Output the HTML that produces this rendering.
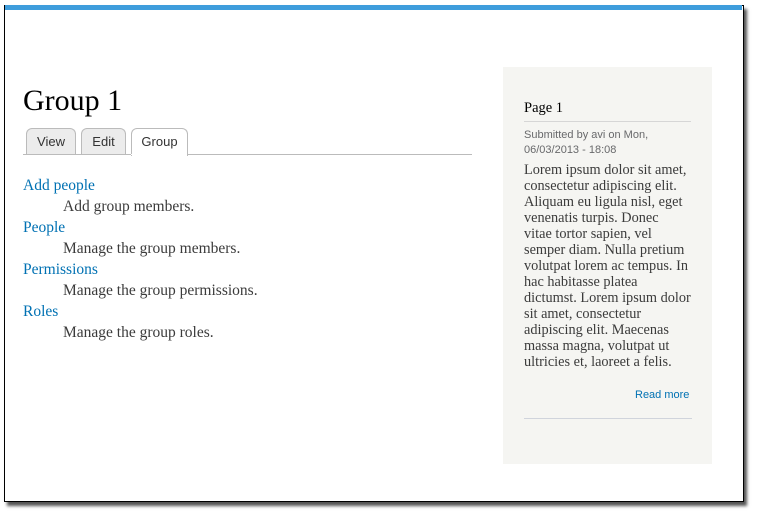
<!DOCTYPE html>
<html><head><style>
body{margin:0;width:760px;height:522px;background:#fff;position:relative;overflow:hidden;font-family:"Liberation Serif",serif}
.a{position:absolute;white-space:nowrap}
.paper{position:absolute;left:4px;top:5px;width:738px;height:495px;background:#fff;border:1px solid #000;box-shadow:3px 4px 3px #555}
.blue{position:absolute;left:5px;top:5px;width:737px;height:5px;background:#3e9ddc}
.tab{position:absolute;top:128px;height:26px;background:#ececec;border:1px solid #bbb;border-bottom:none;border-radius:6px 6px 0 0;font:13px "Liberation Sans",sans-serif;color:#333;text-align:center;line-height:26px;box-sizing:border-box}
.lk{color:#0071b3;font-size:15.5px}
.ds{color:#3b3b3b;font-size:15.5px}
</style></head><body>
<div class="paper"></div>
<div class="blue"></div>
<div class="a" style="left:23px;top:84px;font-size:30px;color:#000">Group 1</div>
<div class="tab" style="left:26px;width:50px">View</div>
<div class="tab" style="left:81px;width:45px">Edit</div>
<div class="tab" style="left:131px;width:57px;background:#fff;height:28px">Group</div>
<div class="a" style="left:23px;top:154px;width:449px;height:1px;background:#bbb"></div>
<div class="a" style="left:131px;top:154px;width:56px;height:1px;background:#fff"></div>
<div class="a lk" style="left:23px;top:177px">Add people</div>
<div class="a ds" style="left:63px;top:198px">Add group members.</div>
<div class="a lk" style="left:23px;top:219px">People</div>
<div class="a ds" style="left:63px;top:240px">Manage the group members.</div>
<div class="a lk" style="left:23px;top:261px">Permissions</div>
<div class="a ds" style="left:63px;top:282px">Manage the group permissions.</div>
<div class="a lk" style="left:23px;top:303px">Roles</div>
<div class="a ds" style="left:63px;top:324px">Manage the group roles.</div>
<div class="a" style="left:503px;top:67px;width:209px;height:397px;background:#f5f5f2"></div>
<div class="a" style="left:524px;top:100px;font-size:14.5px;color:#000">Page 1</div>
<div class="a" style="left:524px;top:121px;width:167px;height:1px;background:#d6d6d6"></div>
<div class="a" style="left:524px;top:128px;font:11px/15px 'Liberation Sans',sans-serif;color:#68696b">Submitted by avi on Mon,<br>06/03/2013 - 18:08</div>
<div class="a" style="left:524px;top:162px;font-size:14.3px;line-height:16px;color:#3b3b3b">Lorem ipsum dolor sit amet,<br>consectetur adipiscing elit.<br>Aliquam eu ligula nisl, eget<br>venenatis turpis. Donec<br>vitae tortor sapien, vel<br>semper diam. Nulla pretium<br>volutpat lorem ac tempus. In<br>hac habitasse platea<br>dictumst. Lorem ipsum dolor<br>sit amet, consectetur<br>adipiscing elit. Maecenas<br>massa magna, volutpat ut<br>ultricies et, laoreet a felis.</div>
<div class="a" style="left:635px;top:389px;font:11px 'Liberation Sans',sans-serif;color:#0071b3">Read more</div>
<div class="a" style="left:524px;top:418px;width:168px;height:1px;background:#d0d4dc"></div>
</body></html>
